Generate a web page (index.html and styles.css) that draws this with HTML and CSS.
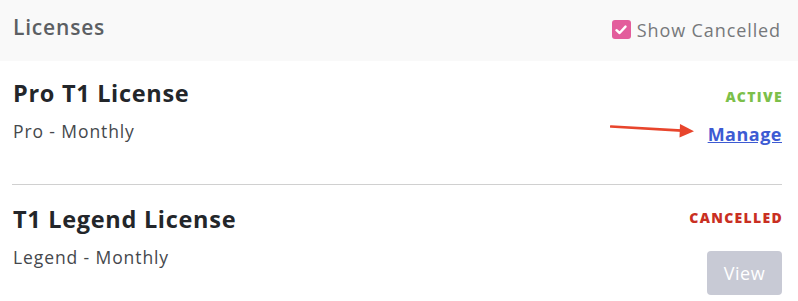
FILE: index.html
```html
<!DOCTYPE html>
<html lang="en">
<head>
  <meta charset="UTF-8" />
  <title>Licenses</title>
  <link rel="stylesheet" href="styles.css">
</head>
<body>
  <div class="panel">
    <div class="panel-header">
      <span class="panel-title">Licenses</span>
      <label class="toggle">
        <span class="checkbox">
          <svg width="12" height="10" viewBox="0 0 12 10"><path d="M1.5 5.2 L4.6 8 L10.5 1.6" fill="none" stroke="#fff" stroke-width="2.4" stroke-linecap="round" stroke-linejoin="round"/></svg>
        </span>
        Show Cancelled
      </label>
    </div>

    <div class="license">
      <div class="license-info">
        <div class="license-name">Pro T1 License</div>
        <div class="license-plan">Pro - Monthly</div>
      </div>
      <div class="license-side">
        <div class="status status-active">ACTIVE</div>
        <div class="action-wrap">
          <svg class="arrow" width="86" height="16" viewBox="0 0 86 16"><path d="M1 3.5 L72 7.6" stroke="#e8452c" stroke-width="2.6" stroke-linecap="round"/><path d="M70 1 L84 8.2 L69.5 14.5 Z" fill="#e8452c"/></svg>
          <a href="#" class="link-manage">Manage</a>
        </div>
      </div>
    </div>

    <div class="license">
      <div class="license-info">
        <div class="license-name">T1 Legend License</div>
        <div class="license-plan">Legend - Monthly</div>
      </div>
      <div class="license-side">
        <div class="status status-cancelled">CANCELLED</div>
        <button class="btn-view" disabled>View</button>
      </div>
    </div>
  </div>
</body>
</html>
```

FILE: styles.css
```css
body {
  margin: 0;
  font-family: 'Open Sans', sans-serif;
  background: #fff;
  color: #212529;
}

.panel {
  width: 798px;
}

.panel-header {
  background-color: #f9f9f9;
  height: 61px;
  display: flex;
  align-items: center;
  justify-content: space-between;
  padding: 0 17px 0 13px;
  box-sizing: border-box;
}

.panel-title {
  font-size: 21px;
  font-weight: 600;
  letter-spacing: 0.8px;
  color: #5c5f63;
  margin-top: -7px;
}

.toggle {
  display: flex;
  align-items: center;
  gap: 6px;
  font-size: 18px;
  letter-spacing: 0.9px;
  color: #76787b;
  margin-top: -2px;
}

.checkbox {
  width: 19px;
  height: 19px;
  border-radius: 3px;
  background-color: #e35d9c;
  display: flex;
  align-items: center;
  justify-content: center;
}

.license {
  display: flex;
  justify-content: space-between;
  margin: 0 16px 0 12px;
  padding: 17px 0 0 1px;
  height: 123px;
  box-sizing: border-box;
}

.license + .license {
  border-top: 1px solid #d0d0d0;
  padding-top: 19px;
  height: 117px;
}

.license-name {
  font-size: 23.5px;
  font-weight: 700;
  letter-spacing: 0.7px;
  color: #23262a;
  line-height: 30px;
}

.license-plan {
  font-size: 17.5px;
  letter-spacing: 0.9px;
  color: #45484c;
  margin-top: 11px;
}

.license-side {
  display: flex;
  flex-direction: column;
  align-items: flex-end;
}

.status {
  font-size: 14px;
  font-weight: 800;
  letter-spacing: 1.3px;
  margin-top: 9px;
  margin-right: -1px;
}

.license + .license .status {
  margin-top: 4px;
}

.status-active {
  color: #7cbf4a;
}

.status-cancelled {
  color: #c92f22;
}

.action-wrap {
  position: relative;
  margin-top: 16px;
}

.arrow {
  position: absolute;
  right: 86px;
  top: 1px;
}

.link-manage {
  color: #3d5bd3;
  font-weight: 700;
  font-size: 18px;
  letter-spacing: 0.5px;
}

.btn-view {
  margin-top: 24px;
  width: 75px;
  height: 44px;
  border: none;
  border-radius: 4px;
  background-color: #c8cad5;
  color: #fff;
  font-family: 'Open Sans', sans-serif;
  font-size: 18px;
  letter-spacing: 0.6px;
}
```
